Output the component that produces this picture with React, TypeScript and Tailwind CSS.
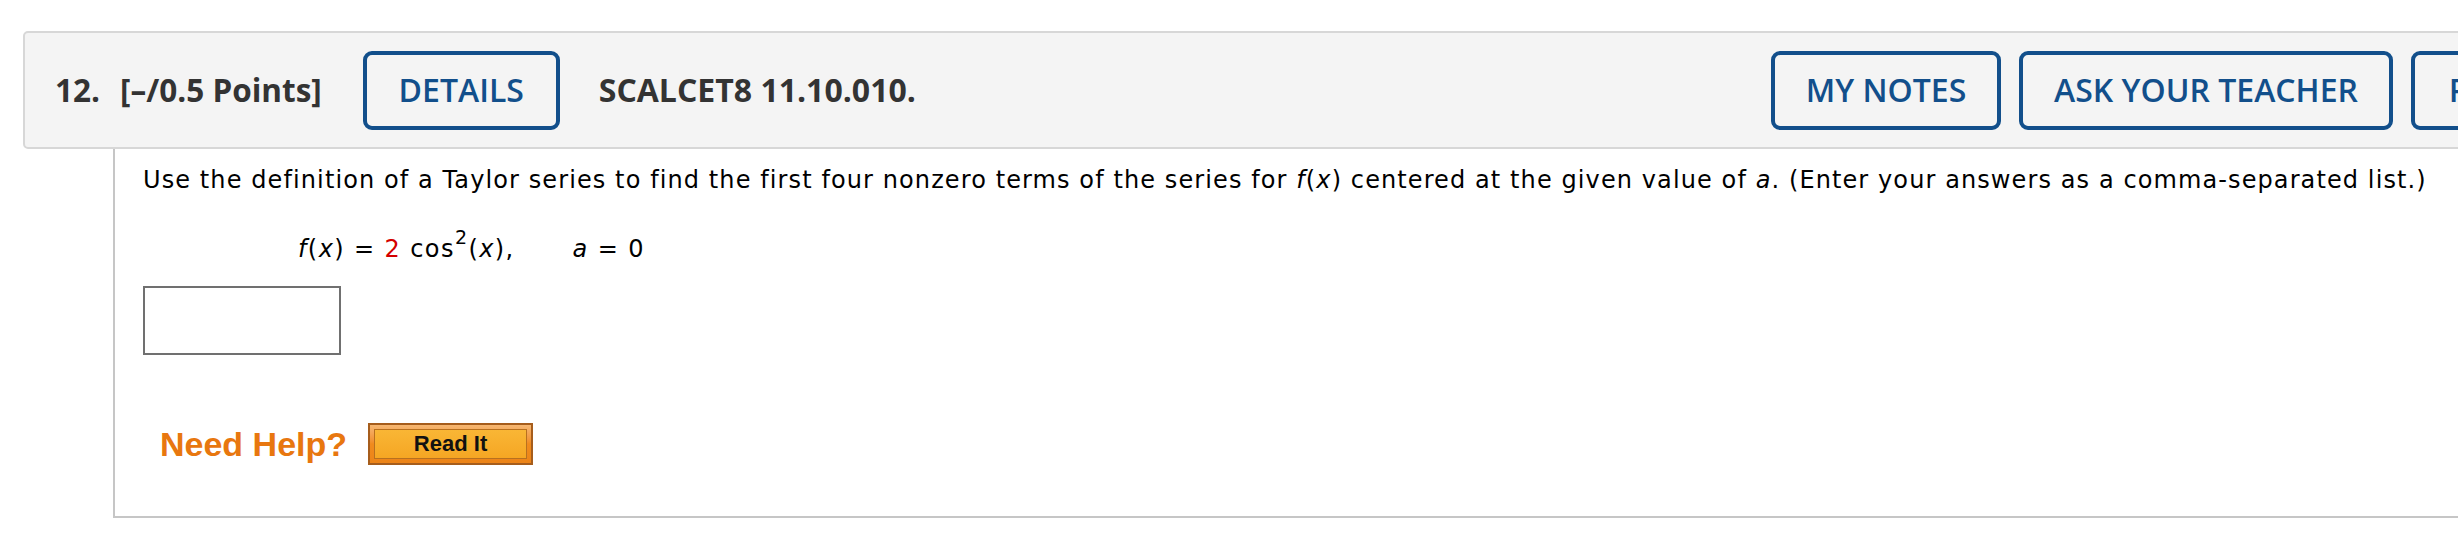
import React from "react";

function OutlineButton({ label, width }: { label: string; width: string }) {
  return (
    <div
      className={`${width} h-[79px] shrink-0 flex items-center justify-center border-[4px] border-[#124f8b] rounded-[9px] text-[#124f8b] text-[32px] font-semibold font-['Open_Sans',sans-serif] whitespace-nowrap`}
    >
      {label}
    </div>
  );
}

export default function App() {
  return (
    <div className="w-[2458px] h-[554px] overflow-hidden bg-white">
      <div className="w-[2900px] pl-[23px] pt-[31px]">
        <div className="w-[2793px] h-[118px] flex items-center bg-[#f4f4f4] border-2 border-[#d7d7d7] rounded-[5px] pl-[30px] pr-[20px] font-['Open_Sans',sans-serif] text-[#333333]">
          <span className="text-[31.5px] font-bold whitespace-nowrap">12.</span>
          <span className="ml-[20px] text-[31.5px] font-bold whitespace-nowrap">[–/0.5 Points]</span>
          <div className="ml-[41px]">
            <OutlineButton label="DETAILS" width="w-[197px]" />
          </div>
          <span className="ml-[39px] text-[32px] font-bold whitespace-nowrap">SCALCET8 11.10.010.</span>
          <div className="ml-auto flex gap-[18px]">
            <OutlineButton label="MY NOTES" width="w-[230px]" />
            <OutlineButton label="ASK YOUR TEACHER" width="w-[374px]" />
            <OutlineButton label="PRACTICE ANOTHER" width="w-[383px]" />
          </div>
        </div>

        <div className="ml-[90px] w-[2700px] border-l-2 border-b-2 border-[#c6c6c6] pl-[28px] pt-[13px] pb-[51px] font-['DejaVu_Sans',sans-serif] text-[24px] text-black">
          <p className="leading-[36px] whitespace-nowrap tracking-[1.1px]">
            Use the definition of a Taylor series to find the first four nonzero terms of the series for{" "}
            <i>f</i>(<i>x</i>) centered at the given value of <i>a</i>. (Enter your answers as a comma-separated list.)
          </p>
          <p className="mt-[33px] ml-[155px] leading-[36px] whitespace-nowrap tracking-[1.4px]">
            <i>f</i>(<i>x</i>) = <span className="text-[#d40000]">2</span> cos
            <span className="relative -top-[13px] text-[19px] leading-none">2</span>(<i>x</i>),
            <span className="inline-block w-[58px]"></span>
            <i>a</i> = 0
          </p>
          <div className="mt-[19px] w-[198px] h-[69px] border-2 border-[#707070] bg-white"></div>
          <div className="mt-[68px] h-[42px] flex items-center">
            <span className="ml-[17px] text-[34px] font-bold text-[#e8770f] font-['Liberation_Sans',Arial,sans-serif] whitespace-nowrap">
              Need Help?
            </span>
            <div className="ml-[21px] w-[165px] h-[42px] border-2 border-[#a65d1c] bg-gradient-to-b from-[#f6b772] via-[#f08b1d] to-[#ec8418] p-[4px]">
              <div className="w-full h-full border border-[#b8701f] bg-gradient-to-b from-[#f9b635] to-[#f5a623] flex items-center justify-center">
                <span className="text-[22px] font-bold text-[#111] font-['Liberation_Sans',Arial,sans-serif] leading-none">
                  Read It
                </span>
              </div>
            </div>
          </div>
        </div>
      </div>
    </div>
  );
}
